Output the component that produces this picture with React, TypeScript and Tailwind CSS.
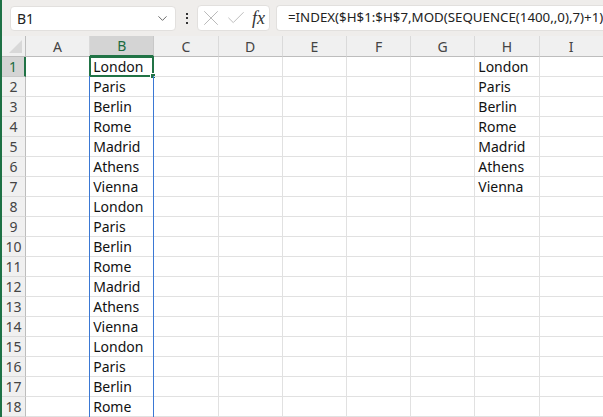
import { ChevronDown, X, Check } from "lucide-react";

const cols = ["A", "B", "C", "D", "E", "F", "G", "H", "I"];
const cities = ["London", "Paris", "Berlin", "Rome", "Madrid", "Athens", "Vienna"];
const rows = Array.from({ length: 18 }, (_, i) => i + 1);

export default function App() {
  return (
    <div
      className="h-[417px] w-[603px] overflow-hidden border-l-2 border-[#1e7145] bg-white text-[#222]"
      style={{ fontFamily: '"Noto Sans", "Open Sans", sans-serif' }}
    >
      {/* formula bar */}
      <div className="flex h-[36px] items-center bg-[#efedeb] pl-[8px]">
        <div className="flex h-[25px] w-[166px] shrink-0 items-center justify-between rounded-[4px] border border-[#e2e0de] bg-white pl-[6px] pr-[5px] text-[14px]">
          <span>B1</span>
          <ChevronDown size={15} strokeWidth={1.4} className="text-[#555]" />
        </div>
        <div className="ml-[10px] flex h-[11px] shrink-0 flex-col justify-between">
          <span className="block h-[2px] w-[2px] bg-[#333]" />
          <span className="block h-[2px] w-[2px] bg-[#333]" />
          <span className="block h-[2px] w-[2px] bg-[#333]" />
        </div>
        <div className="ml-[9px] flex h-[26px] w-[73px] shrink-0 items-center rounded-[4px] border border-[#e2e0de] bg-white">
          <X size={26} strokeWidth={0.9} className="text-[#b8b8b8]" />
          <Check size={22} strokeWidth={1} className="ml-[1px] text-[#b8b8b8]" />
          <span
            className="ml-[5px] text-[18px] leading-none italic text-[#333]"
            style={{ fontFamily: '"Liberation Serif", "DejaVu Serif", serif' }}
          >
            fx
          </span>
        </div>
        <div className="ml-[6px] flex h-[26px] min-w-0 flex-1 items-center overflow-hidden rounded-l-[4px] border border-r-0 border-[#e2e0de] bg-white pl-[11px] text-[13.3px] whitespace-nowrap">
          =INDEX($H$1:$H$7,MOD(SEQUENCE(1400,,0),7)+1)
        </div>
      </div>

      {/* sheet */}
      <div className="grid grid-cols-[24px_repeat(9,64.2px)] text-[14px]">
        <div className="relative h-[21px] border-b border-r border-[#bdbdbd] bg-[#f0f0f0]">
          <div className="absolute bottom-[3px] right-[3px] h-0 w-0 border-b-[13px] border-l-[13px] border-b-[#d8d8d8] border-l-transparent" />
        </div>
        {cols.map((c) => (
          <div
            key={c}
            className={
              c === "B"
                ? "flex h-[21px] items-center justify-center border-b-2 border-r border-b-[#217346] border-r-[#c8c8c8] bg-[#d4d4d4] text-[#1d6b40]"
                : "flex h-[21px] items-center justify-center border-b border-r border-b-[#bdbdbd] border-r-[#dadada] bg-[#f0f0f0] text-[#444]"
            }
          >
            {c}
          </div>
        ))}

        {rows.map((r) => {
          const city = cities[(r - 1) % 7];
          return [
            <div
              key={`h${r}`}
              className={
                r === 1
                  ? "flex h-[20px] items-center justify-center border-b border-r-2 border-b-[#c8c8c8] border-r-[#217346] bg-[#d4d4d4] text-[#1d6b40]"
                  : "flex h-[20px] items-center justify-center border-b border-r border-b-[#dadada] border-r-[#bdbdbd] bg-[#f0f0f0] text-[#444]"
              }
            >
              {r}
            </div>,
            ...cols.map((c) => (
              <div
                key={`${c}${r}`}
                className="relative flex h-[20px] items-center border-b border-r border-[#e1e1e1] pl-[3px] text-[#111]"
              >
                {c === "B" && city}
                {c === "H" && r <= 7 && city}
                {c === "B" && r > 1 && (
                  <div className="absolute -left-px -top-px bottom-[-1px] right-[-1px] border-x border-[#3a78d4]" />
                )}
                {c === "B" && r === 1 && (
                  <>
                    <div className="absolute -left-px -top-px bottom-[-1px] right-[-1px] border-2 border-[#217346]" />
                    <div className="absolute bottom-[-3px] right-[-3px] h-[6px] w-[6px] border border-white bg-[#217346]" />
                  </>
                )}
              </div>
            )),
          ];
        })}
      </div>
    </div>
  );
}
